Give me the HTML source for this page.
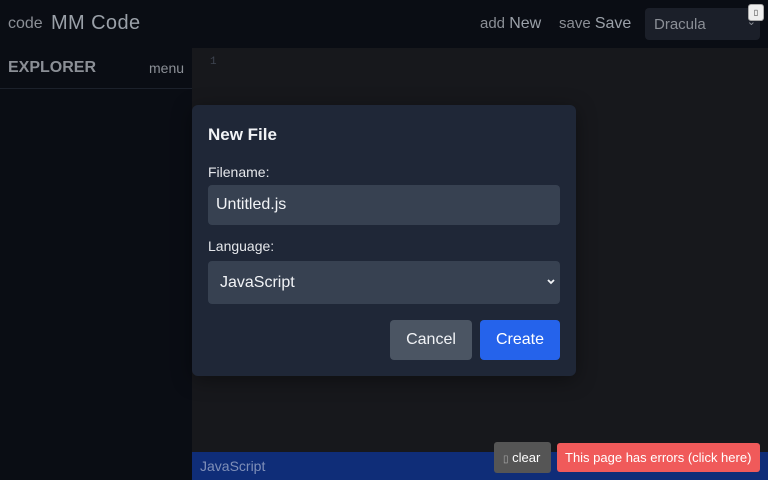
<!DOCTYPE html>
<html><head><style>
*{box-sizing:border-box;margin:0;padding:0}
body{width:768px;height:480px;overflow:hidden;background:#0a0d14;font-family:"Liberation Sans",sans-serif;position:relative}
.a{position:absolute}
</style></head><body>
<div class="a" style="left:0;top:0;width:768px;height:48px;background:#0a0d14"></div>
<div class="a" style="left:8px;top:15px;font-size:16px;color:#8b8f96">code</div>
<div class="a" style="left:51px;top:12px;font-size:20px;color:#9aa0a8;letter-spacing:0.4px">MM Code</div>
<div class="a" style="left:480px;top:15px;font-size:15px;color:#8b8f96">add <span style="font-size:16px;color:#9aa0a8">New</span></div>
<div class="a" style="left:559px;top:15px;font-size:15px;color:#8b8f96">save <span style="font-size:16px;color:#9aa0a8">Save</span></div>
<div class="a" style="left:645px;top:8px;width:115px;height:32px;background:#1b1f29;border-radius:4px;color:#8b8f96;font-size:15px;padding:8px 0 0 9px">Dracula<span class="a" style="right:4px;top:7px;font-size:11px">&#8964;</span></div>
<div class="a" style="left:748px;top:4px;width:16px;height:17px;background:#eee;border:1px solid #aaa;border-radius:3px;font-size:8px;color:#333;text-align:center;line-height:15px">▯</div>
<div class="a" style="left:0;top:48px;width:192px;height:432px;background:#0a0d14"></div>
<div class="a" style="left:8px;top:59px;font-size:16px;font-weight:bold;color:#8b8f96">EXPLORER</div>
<div class="a" style="left:149px;top:60px;font-size:14px;color:#8b8f96">menu</div>
<div class="a" style="left:0;top:88px;width:192px;height:1px;background:#1c212b"></div>
<div class="a" style="left:192px;top:48px;width:576px;height:404px;background:#17181c"></div>
<div class="a" style="left:210px;top:56px;font-size:11px;color:#3e4450;font-family:'Liberation Mono',monospace">1</div>
<div class="a" style="left:192px;top:452px;width:576px;height:28px;background:#0f2d78"></div>
<div class="a" style="left:200px;top:458px;font-size:14px;color:#7f8fb8">JavaScript</div>
<div class="a" style="left:494px;top:442px;width:57px;height:31px;background:#555;border-radius:3px;color:#fff;font-size:13px;padding:8px 0 0 9px"><span style="color:#aaa;font-size:10px">▯</span> clear</div>
<div class="a" style="left:557px;top:443px;width:203px;height:29px;background:#f05a5a;border-radius:3px;color:#fff;font-size:13px;padding:7px 0 0 8px">This page has errors (click here)</div>
<div class="a" style="left:192px;top:105px;width:384px;height:271px;background:#1f2737;border-radius:6px;box-shadow:0 4px 20px rgba(0,0,0,.4)"></div>
<div class="a" style="left:208px;top:125px;font-size:17px;font-weight:bold;color:#f1f3f6">New File</div>
<div class="a" style="left:208px;top:164px;font-size:14px;color:#e5e7eb">Filename:</div>
<div class="a" style="left:208px;top:185px;width:352px;height:40px;background:#374151;border-radius:4px;color:#f1f3f6;font-size:16px;padding:11px 0 0 8px">Untitled.js</div>
<div class="a" style="left:208px;top:238px;font-size:14px;color:#e5e7eb">Language:</div>
<div class="a" style="left:208px;top:261px;width:352px;height:43px;background:#374151;border-radius:4px;color:#f1f3f6;font-size:16px;padding:13px 0 0 12px">JavaScript
<svg class="a" style="right:5px;top:18px" width="8" height="6" viewBox="0 0 8 6"><path d="M1 1l3 3 3-3" stroke="#f1f3f6" stroke-width="1.8" fill="none"/></svg></div>
<div class="a" style="left:390px;top:320px;width:82px;height:40px;background:#4b5563;border-radius:4px;color:#f1f3f6;font-size:16px;text-align:center;line-height:40px">Cancel</div>
<div class="a" style="left:480px;top:320px;width:80px;height:40px;background:#2563eb;border-radius:4px;color:#fff;font-size:16px;text-align:center;line-height:40px">Create</div>
</body></html>
